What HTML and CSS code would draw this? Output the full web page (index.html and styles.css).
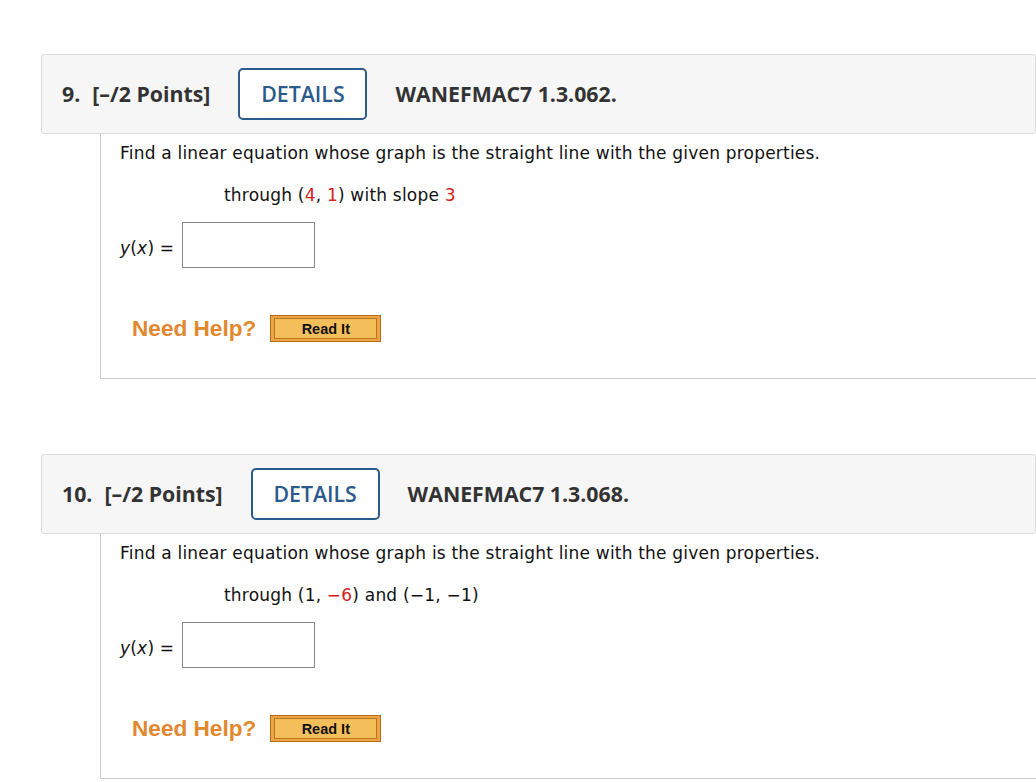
FILE: index.html
```html
<!DOCTYPE html>
<html>
<head>
<meta charset="utf-8">
<link rel="stylesheet" href="styles.css">
</head>
<body>
<div class="page">
  <div class="question">
    <div class="q-head">
      <span class="q-num">9.</span>
      <span class="q-pts">[–/2 Points]</span>
      <button class="details">DETAILS</button>
      <span class="q-code">WANEFMAC7 1.3.062.</span>
    </div>
    <div class="q-body">
      <p class="prompt">Find a linear equation whose graph is the straight line with the given properties.</p>
      <p class="given">through (<span class="red">4</span>, <span class="red">1</span>) with slope <span class="red">3</span></p>
      <div class="answer">
        <span class="label"><i>y</i>(<i>x</i>) =</span>
        <span class="box"></span>
      </div>
      <div class="help">
        <span class="need">Need Help?</span>
        <span class="readit"><span class="readit-in">Read It</span></span>
      </div>
    </div>
  </div>

  <div class="question second">
    <div class="q-head">
      <span class="q-num">10.</span>
      <span class="q-pts">[–/2 Points]</span>
      <button class="details">DETAILS</button>
      <span class="q-code">WANEFMAC7 1.3.068.</span>
    </div>
    <div class="q-body">
      <p class="prompt">Find a linear equation whose graph is the straight line with the given properties.</p>
      <p class="given">through (1, <span class="red">−6</span>) and (−1, −1)</p>
      <div class="answer">
        <span class="label"><i>y</i>(<i>x</i>) =</span>
        <span class="box"></span>
      </div>
      <div class="help">
        <span class="need">Need Help?</span>
        <span class="readit"><span class="readit-in">Read It</span></span>
      </div>
    </div>
  </div>
</div>
</body>
</html>
```
FILE: styles.css
```css
html, body {
  margin: 0;
  padding: 0;
  background: #ffffff;
  overflow: hidden;
}
.page {
  padding: 54px 0 0 41px;
}
.question.second {
  margin-top: 75px;
}
.q-head {
  box-sizing: border-box;
  height: 80px;
  width: 995px;
  background: #f6f6f6;
  border: 1px solid #dcdcdc;
  border-radius: 3px;
  display: flex;
  align-items: center;
  padding-left: 20px;
  padding-bottom: 1px;
  font-family: "Open Sans", "DejaVu Sans", sans-serif;
  font-size: 21.3px;
  font-weight: 700;
  color: #333333;
}
.q-num {
  margin-right: 12px;
}
.details {
  box-sizing: border-box;
  margin-left: 28px;
  margin-right: 28px;
  width: 129px;
  height: 52px;
  background: #ffffff;
  border: 2px solid #2a5b8c;
  border-radius: 5px;
  font-family: "Open Sans", "DejaVu Sans", sans-serif;
  font-size: 21.3px;
  font-weight: 600;
  color: #2a5b8c;
  padding: 0;
}
.q-body {
  box-sizing: border-box;
  margin-left: 59px;
  width: 936px;
  border-left: 1px solid #cccccc;
  border-bottom: 1px solid #cccccc;
  padding: 8px 0 0 19px;
  height: 245px;
  font-family: "DejaVu Sans", Verdana, sans-serif;
  font-size: 17px;
  letter-spacing: 0.2px;
  color: #111111;
}
.prompt {
  margin: 0;
  line-height: 22px;
}
.given {
  margin: 20px 0 0 104px;
  line-height: 22px;
}
.red {
  color: #d4201a;
}
.answer {
  display: flex;
  align-items: center;
  margin-top: 16px;
}
.label {
  margin-right: 8px;
  padding-top: 6px;
}
.box {
  box-sizing: border-box;
  width: 133px;
  height: 46px;
  border: 1px solid #888888;
  background: #ffffff;
}
.help {
  display: flex;
  align-items: center;
  margin: 47px 0 0 12px;
}
.need {
  font-family: "Liberation Sans", Arial, sans-serif;
  font-weight: 700;
  font-size: 22.6px;
  letter-spacing: 0;
  color: #e2882e;
  margin-right: 14px;
}
.readit {
  box-sizing: border-box;
  width: 111px;
  height: 27px;
  border: 1px solid #b36c1e;
  background: #eea443;
  padding: 2px 3px;
  display: flex;
}
.readit-in {
  flex: 1;
  border: 1px solid #b8741e;
  background: #f4bf5a;
  font-family: "Liberation Sans", Arial, sans-serif;
  font-weight: 700;
  font-size: 14.5px;
  letter-spacing: 0;
  color: #111111;
  display: flex;
  align-items: center;
  justify-content: center;
}
```
